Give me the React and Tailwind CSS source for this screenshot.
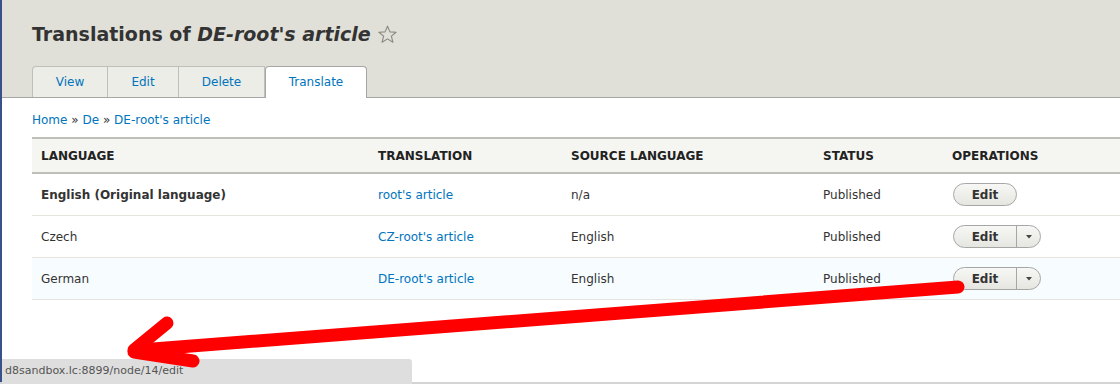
import React from "react";

const font = { fontFamily: '"DejaVu Sans", Verdana, sans-serif' };

function EditBtn({ drop }) {
  return (
    <div className="flex h-[23px] rounded-full border border-[#a6a6a6] bg-gradient-to-b from-[#f7f7f5] to-[#e6e6e1] overflow-hidden">
      <div className="w-[62px] flex items-center justify-center text-[12px] font-bold text-[#333]">Edit</div>
      {drop && (
        <div className="w-[24px] border-l border-[#a6a6a6] flex items-center justify-center">
          <svg width="6" height="4" viewBox="0 0 6 4"><path d="M0 0 L6 0 L3 3.5 Z" fill="#444" /></svg>
        </div>
      )}
    </div>
  );
}

function Row({ lang, bold, trans, src, bg }) {
  return (
    <div className={`grid grid-cols-[337px_193px_252px_129px_1fr] h-[42px] items-center border-b border-[#e6e4df] text-[12px] text-[#333] ${bg || ""}`}>
      <div className={`pl-[9px] ${bold ? "font-bold" : ""}`}>{lang}</div>
      <div className="pl-[9px] text-[#0074bd]">{trans.text}</div>
      <div className="pl-[9px]">{src}</div>
      <div className="pl-[9px]">Published</div>
      <div className="pl-[10px] flex">
        <EditBtn drop={trans.drop} />
      </div>
    </div>
  );
}

export default function App() {
  return (
    <div className="relative w-[1120px] h-[384px] overflow-hidden bg-white flex" style={font}>
      <div className="w-[2px] h-full bg-[#38518a]" />
      <div className="flex-1 flex flex-col">
        <div className="h-[98px] bg-[#e0e0d8] border-b border-[#a6a6a6] flex flex-col pl-[30px]">
          <div className="h-[66px] flex items-center pt-[2px]">
            <h1 className="text-[19px] font-bold text-[#333] leading-none">
              Translations of <em>DE-root's article</em>
            </h1>
            <svg className="ml-[6px] mt-[1px]" width="21" height="21" viewBox="0 0 24 24">
              <path d="M12 2.5 L14.8 9 L21.8 9.4 L16.4 13.9 L18.2 20.8 L12 17 L5.8 20.8 L7.6 13.9 L2.2 9.4 L9.2 9 Z" fill="none" stroke="#8a8a80" strokeWidth="1.3" strokeLinejoin="round" />
            </svg>
          </div>
          <div className="flex h-[31px] text-[12px] text-[#0074bd] mb-[-1px]">
            <div className="w-[76px] flex items-center justify-center bg-[#ededE7] border border-b-0 border-[#bfbfba] rounded-tl-[4px]">View</div>
            <div className="w-[71px] flex items-center justify-center bg-[#ededE7] border border-l-0 border-b-0 border-[#bfbfba]">Edit</div>
            <div className="w-[86px] flex items-center justify-center bg-[#ededE7] border border-l-0 border-b-0 border-[#bfbfba]">Delete</div>
            <div className="w-[102px] flex items-center justify-center bg-white border border-b-0 border-[#a6a6a6] rounded-t-[4px] relative z-10 h-[32px] pb-[1px]">Translate</div>
          </div>
        </div>
        <div className="pl-[30px] pt-[16px] text-[12px] text-[#0074bd] leading-none h-[39px]">
          <span>Home</span> <span className="text-[#333]">»</span> <span>De</span> <span className="text-[#333]">»</span> <span>DE-root's article</span>
        </div>
        <div className="ml-[30px]">
          <div className="grid grid-cols-[337px_193px_252px_129px_1fr] h-[37px] items-center bg-[#f5f5f2] border-t-2 border-b-2 border-[#bfbfba] text-[12px] font-bold text-[#222] uppercase">
            <div className="pl-[9px]">Language</div>
            <div className="pl-[9px]">Translation</div>
            <div className="pl-[9px]">Source language</div>
            <div className="pl-[9px]">Status</div>
            <div className="pl-[9px]">Operations</div>
          </div>
          <Row lang="English (Original language)" bold trans={{ text: "root's article", drop: false }} src="n/a" />
          <Row lang="Czech" trans={{ text: "CZ-root's article", drop: true }} src="English" />
          <Row lang="German" trans={{ text: "DE-root's article", drop: true }} src="English" bg="bg-[#f7fcff]" />
        </div>
      </div>
      <div className="absolute left-0 right-0 bottom-0 h-[2px] bg-[#d4d4d4]" />
      <div className="absolute left-[2px] bottom-0 w-[410px] h-[25px] bg-[#dedede] rounded-tr-[3px] pl-[3px] pt-[6px] text-[11px] leading-none text-[#555]">
        d8sandbox.lc:8899/node/14/edit
      </div>
      <svg className="absolute inset-0 pointer-events-none" width="1120" height="384" viewBox="0 0 1120 384">
        <g stroke="#ff0000" strokeWidth="13" strokeLinecap="round" strokeLinejoin="round" fill="none">
          <path d="M958 287 L140 350" />
          <path d="M167 323 L134 350" />
          <path d="M134 352 L193 361" />
        </g>
      </svg>
    </div>
  );
}
